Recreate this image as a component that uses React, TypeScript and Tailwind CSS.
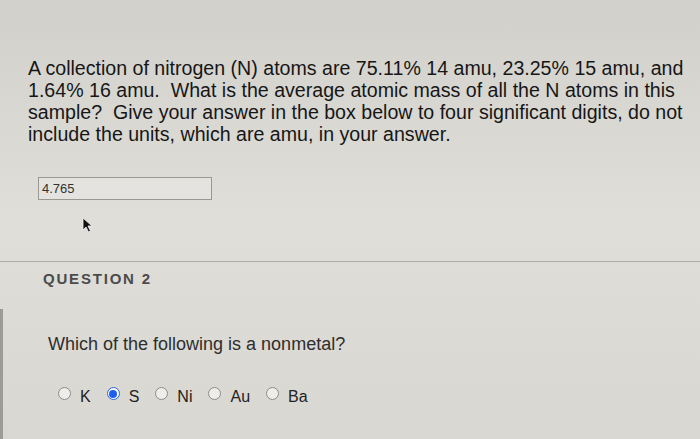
import React from "react";

const options = [
  { label: "K", checked: false },
  { label: "S", checked: true },
  { label: "Ni", checked: false },
  { label: "Au", checked: false },
  { label: "Ba", checked: false },
];

function Cursor() {
  return (
    <svg width="12" height="16" viewBox="0 0 12 16" className="ml-[54px] mt-[17px] block">
      <path d="M1 1 L1 13 L4 10 L6.5 15 L8.5 14 L6 9 L10 9 Z" fill="#111" stroke="#f2f2f2" strokeWidth="0.8" />
    </svg>
  );
}

function Radio({ checked }: { checked: boolean }) {
  if (checked) {
    return (
      <span className="flex h-[13px] w-[13px] items-center justify-center rounded-full border border-[#2a62d8] bg-white">
        <span className="block h-[8px] w-[8px] rounded-full bg-[#1f5ff0]" />
      </span>
    );
  }
  return <span className="block h-[13px] w-[13px] rounded-full border-[1.5px] border-[#8c8c8c] bg-[#eeede9]" />;
}

export default function App() {
  return (
    <div
      className="flex h-[439px] w-[700px] flex-col overflow-hidden bg-gradient-to-b from-[#d2d0cb] via-[#dfded9] to-[#d9d7d2] text-[#1c1c1c]"
      style={{ fontFamily: '"Liberation Sans", Arial, sans-serif' }}
    >
      {/* question 1 */}
      <div className="pl-[28px] pt-[57px]">
        <p className="whitespace-nowrap text-[19.6px] leading-[22px] text-[#161616]">
          A collection of nitrogen (N) atoms are 75.11% 14 amu, 23.25% 15 amu, and
          <br />
          1.64% 16 amu.&nbsp; What is the average atomic mass of all the N atoms in this
          <br />
          sample?&nbsp; Give your answer in the box below to four significant digits, do not
          <br />
          include the units, which are amu, in your answer.
        </p>
        <div className="ml-[10px] mt-[32px] flex h-[23px] w-[174px] items-center border border-[#9a9893] bg-[#e4e3df] px-[3px] text-[13px] text-[#333]">
          4.765
        </div>
        <Cursor />
      </div>

      <div className="mt-[28px] h-px w-full bg-[#aeaca7]" />

      {/* question 2 */}
      <div className="pl-[43px] pt-[6px] text-[15px] font-bold tracking-[1.8px] text-[#4b4b4b]">
        QUESTION 2
      </div>
      <div className="mt-[18px] flex-1 border-l-[3px] border-[#9d9b96]">
        <div className="pl-[45px] pt-[22px] text-[18px] text-[#2e2e2e]">
          Which of the following is a nonmetal?
        </div>
        <div className="flex items-center pl-[55px] pt-[27px] text-[16px] text-[#222]">
          {options.map((o) => (
            <div key={o.label} className="mr-[16px] flex items-center">
              <span className="-mt-[6px] block">
                <Radio checked={o.checked} />
              </span>
              <span className="ml-[9px]">{o.label}</span>
            </div>
          ))}
        </div>
      </div>
    </div>
  );
}
